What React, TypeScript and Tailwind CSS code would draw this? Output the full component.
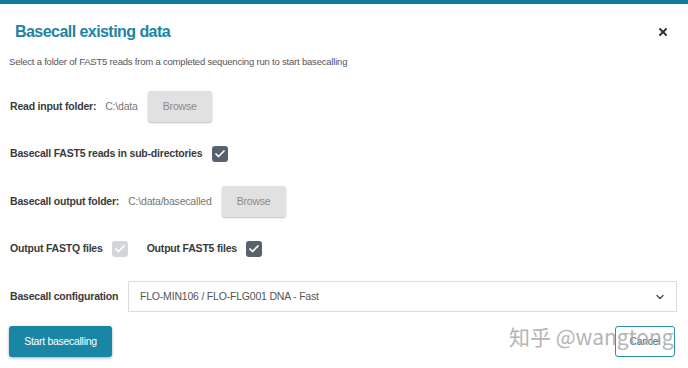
import { ChevronDown, X, Check } from "lucide-react";

function Checkbox({ checked, disabled }: { checked: boolean; disabled?: boolean }) {
  return (
    <span
      className={`flex h-4 w-4 items-center justify-center rounded-[3px] ${
        disabled ? "bg-[#d3d6d9]" : "bg-[#56626d]"
      }`}
    >
      {checked && <Check className="h-3 w-3 text-white" strokeWidth={3.5} />}
    </span>
  );
}

function BrowseButton() {
  return (
    <button className="h-[31px] w-16 rounded-[3px] bg-[#e1e1e1] text-[10.5px] text-[#8a8a8a] shadow-[0_1px_2px_rgba(0,0,0,0.25)]">
      Browse
    </button>
  );
}

export default function App() {
  return (
    <div className="relative h-[368px] w-[688px] overflow-hidden bg-white font-['Liberation_Sans',Arial,sans-serif] text-[#333]">
      <div className="h-1 bg-[#0d7c9d]" />

      <div className="flex items-center justify-between pl-[15px] pr-[19px] pt-[16px]">
        <h1 className="text-[16px] font-bold tracking-[-0.55px] text-[#1b84a3]">Basecall existing data</h1>
        <X className="h-3 w-3 text-[#333]" strokeWidth={4} />
      </div>

      <p className="mt-[11px] pl-[9px] text-[9.5px] tracking-[-0.2px] text-[#555]">
        Select a folder of FAST5 reads from a completed sequencing run to start basecalling
      </p>

      <div className="mt-[22px] flex flex-col gap-[16.5px] pl-[10px] pr-[11px] text-[10.5px] tracking-[-0.2px]">
        <div className="flex h-[31px] items-center">
          <span className="font-bold text-[#3a3a3a]">Read input folder:</span>
          <span className="ml-[9px] mr-[10px] text-[#777]">C:\data</span>
          <BrowseButton />
        </div>

        <div className="flex h-[31px] items-center">
          <span className="font-bold text-[#3a3a3a]">Basecall FAST5 reads in sub-directories</span>
          <span className="ml-[10px]">
            <Checkbox checked />
          </span>
        </div>

        <div className="flex h-[31px] items-center">
          <span className="font-bold text-[#3a3a3a]">Basecall output folder:</span>
          <span className="ml-[9px] mr-[10px] text-[#777]">C:\data/basecalled</span>
          <BrowseButton />
        </div>

        <div className="flex h-[31px] items-center">
          <span className="font-bold text-[#3a3a3a]">Output FASTQ files</span>
          <span className="ml-[9px]">
            <Checkbox checked disabled />
          </span>
          <span className="ml-[19px] font-bold text-[#3a3a3a]">Output FAST5 files</span>
          <span className="ml-[9px]">
            <Checkbox checked />
          </span>
        </div>

        <div className="flex h-[31px] items-center">
          <span className="w-[118px] font-bold text-[#3a3a3a]">Basecall configuration</span>
          <div className="flex h-[31px] flex-1 items-center justify-between border border-[#dcdcdc] pl-[11px] pr-[10px]">
            <span className="text-[#555]">FLO-MIN106 / FLO-FLG001 DNA - Fast</span>
            <ChevronDown className="h-3 w-3 text-[#555]" strokeWidth={3} />
          </div>
        </div>
      </div>

      <div className="mt-[14px] flex items-center justify-between pl-[9px] pr-[13px]">
        <button className="h-[31px] w-[103px] rounded-[3px] bg-[#1a86a5] text-[10.5px] tracking-[-0.3px] text-white shadow-[0_1px_3px_rgba(0,0,0,0.35)]">
          Start basecalling
        </button>
        <button className="h-[31px] w-[60px] rounded-[3px] border border-[#2a8fa9] bg-white text-[10px] text-[#1d6f86]">
          Cancel
        </button>
      </div>

      <div className="pointer-events-none absolute left-[509px] top-[326px] font-['Noto_Sans_CJK_SC',sans-serif] text-[21px] leading-none text-[#a3a3a3] opacity-80">
        知乎 @wangtong
      </div>
    </div>
  );
}
